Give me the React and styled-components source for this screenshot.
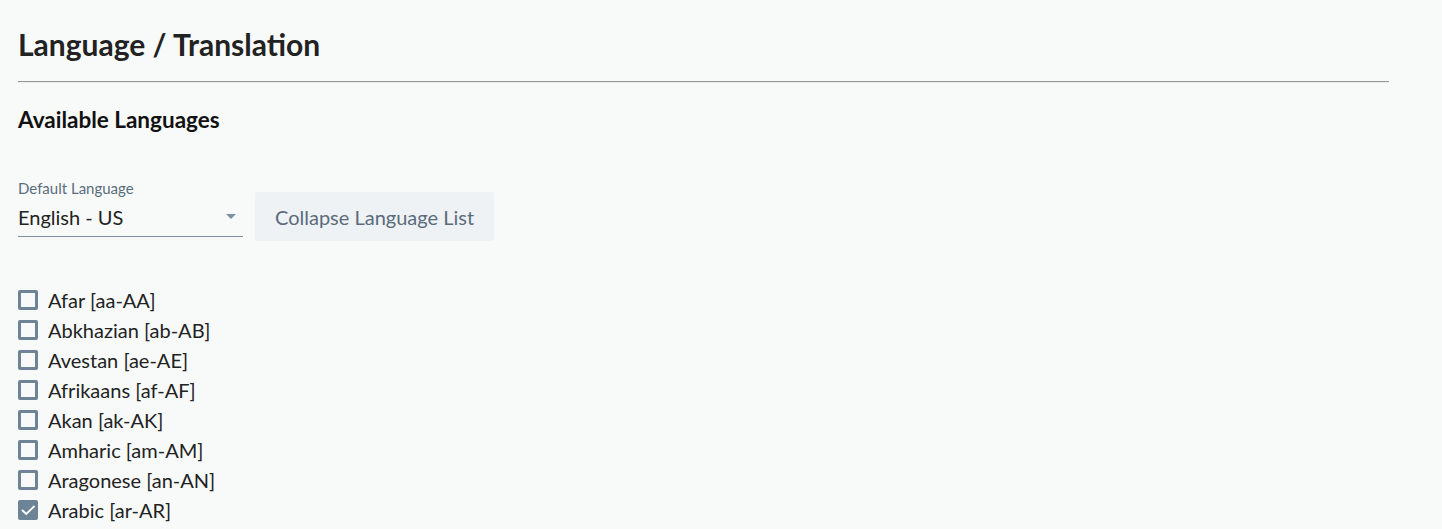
import React, { useState } from 'react';
import styled, { createGlobalStyle } from 'styled-components';

const GlobalStyle = createGlobalStyle`
  html, body {
    margin: 0;
    padding: 0;
    background: #f8fafa;
  }
  body {
    font-family: Lato, "Noto Sans", sans-serif;
    color: #222;
  }
`;

const Page = styled.div`
  padding: 22px 18px 0 18px;
  width: 1371px;
`;

const Title = styled.h1`
  margin: 0;
  font-size: 30px;
  line-height: 44px;
  font-weight: 700;
  color: #222;
`;

const Rule = styled.hr`
  margin: 15px 0 0 0;
  border: 0;
  border-top: 1px solid #999;
  border-bottom: 1px solid #ececec;
`;

const SectionTitle = styled.h2`
  margin: 23px 0 0 0;
  font-size: 22.5px;
  line-height: 28px;
  font-weight: 700;
  color: #111;
`;

const Controls = styled.div`
  display: flex;
  align-items: flex-start;
  gap: 12px;
  margin-top: 45px;
`;

const Field = styled.label`
  display: flex;
  flex-direction: column;
  width: 225px;
`;

const FieldLabel = styled.span`
  font-size: 15px;
  line-height: 18px;
  color: #5b6c7b;
`;

const SelectBox = styled.div`
  display: flex;
  align-items: center;
  justify-content: space-between;
  height: 39px;
  padding-top: 0;
  border-bottom: 1px solid #7d8fa0;
  font-size: 20px;
  color: #222;
`;

const Caret = styled.span`
  width: 0;
  height: 0;
  margin-right: 7px;
  border-left: 5px solid transparent;
  border-right: 5px solid transparent;
  border-top: 5px solid #7d91a2;
`;

const Button = styled.button`
  height: 49px;
  margin-top: 13px;
  padding: 0 20px;
  border: 0;
  border-radius: 2px;
  background: #eef2f5;
  color: #5b6b7b;
  font-family: Lato, "Noto Sans", sans-serif;
  font-size: 20px;
  cursor: pointer;
`;

const List = styled.ul`
  list-style: none;
  margin: 44px 0 0 0;
  padding: 0;
`;

const Row = styled.li`
  display: flex;
  align-items: center;
  gap: 10px;
  height: 30px;
  font-size: 20px;
  color: #222;
  cursor: pointer;
`;

const Box = styled.span`
  box-sizing: border-box;
  flex: none;
  width: 20px;
  height: 20px;
  border-radius: 2px;
  border: 3px solid #6d8496;
  background: ${({ $checked }) => ($checked ? '#6d8496' : 'transparent')};
  display: flex;
  align-items: center;
  justify-content: center;

  svg {
    overflow: visible;
  }
`;

const languages = [
  { name: 'Afar', code: 'aa-AA' },
  { name: 'Abkhazian', code: 'ab-AB' },
  { name: 'Avestan', code: 'ae-AE' },
  { name: 'Afrikaans', code: 'af-AF' },
  { name: 'Akan', code: 'ak-AK' },
  { name: 'Amharic', code: 'am-AM' },
  { name: 'Aragonese', code: 'an-AN' },
  { name: 'Arabic', code: 'ar-AR' },
];

const Check = () => (
  <svg width="14" height="14" viewBox="0 0 14 14" fill="none">
    <path d="M1 7 L5.2 11 L13.5 3" stroke="#fff" strokeWidth="1.8" />
  </svg>
);

export default function App() {
  const [selected, setSelected] = useState(['ar-AR']);

  const toggle = (code) =>
    setSelected((s) => (s.includes(code) ? s.filter((c) => c !== code) : [...s, code]));

  return (
    <Page>
      <GlobalStyle />
      <Title>Language / Translation</Title>
      <Rule />
      <SectionTitle>Available Languages</SectionTitle>

      <Controls>
        <Field>
          <FieldLabel>Default Language</FieldLabel>
          <SelectBox>
            <span>English - US</span>
            <Caret />
          </SelectBox>
        </Field>
        <Button>Collapse Language List</Button>
      </Controls>

      <List>
        {languages.map(({ name, code }) => {
          const checked = selected.includes(code);
          return (
            <Row key={code} onClick={() => toggle(code)}>
              <Box $checked={checked}>{checked && <Check />}</Box>
              {name} [{code}]
            </Row>
          );
        })}
      </List>
    </Page>
  );
}
